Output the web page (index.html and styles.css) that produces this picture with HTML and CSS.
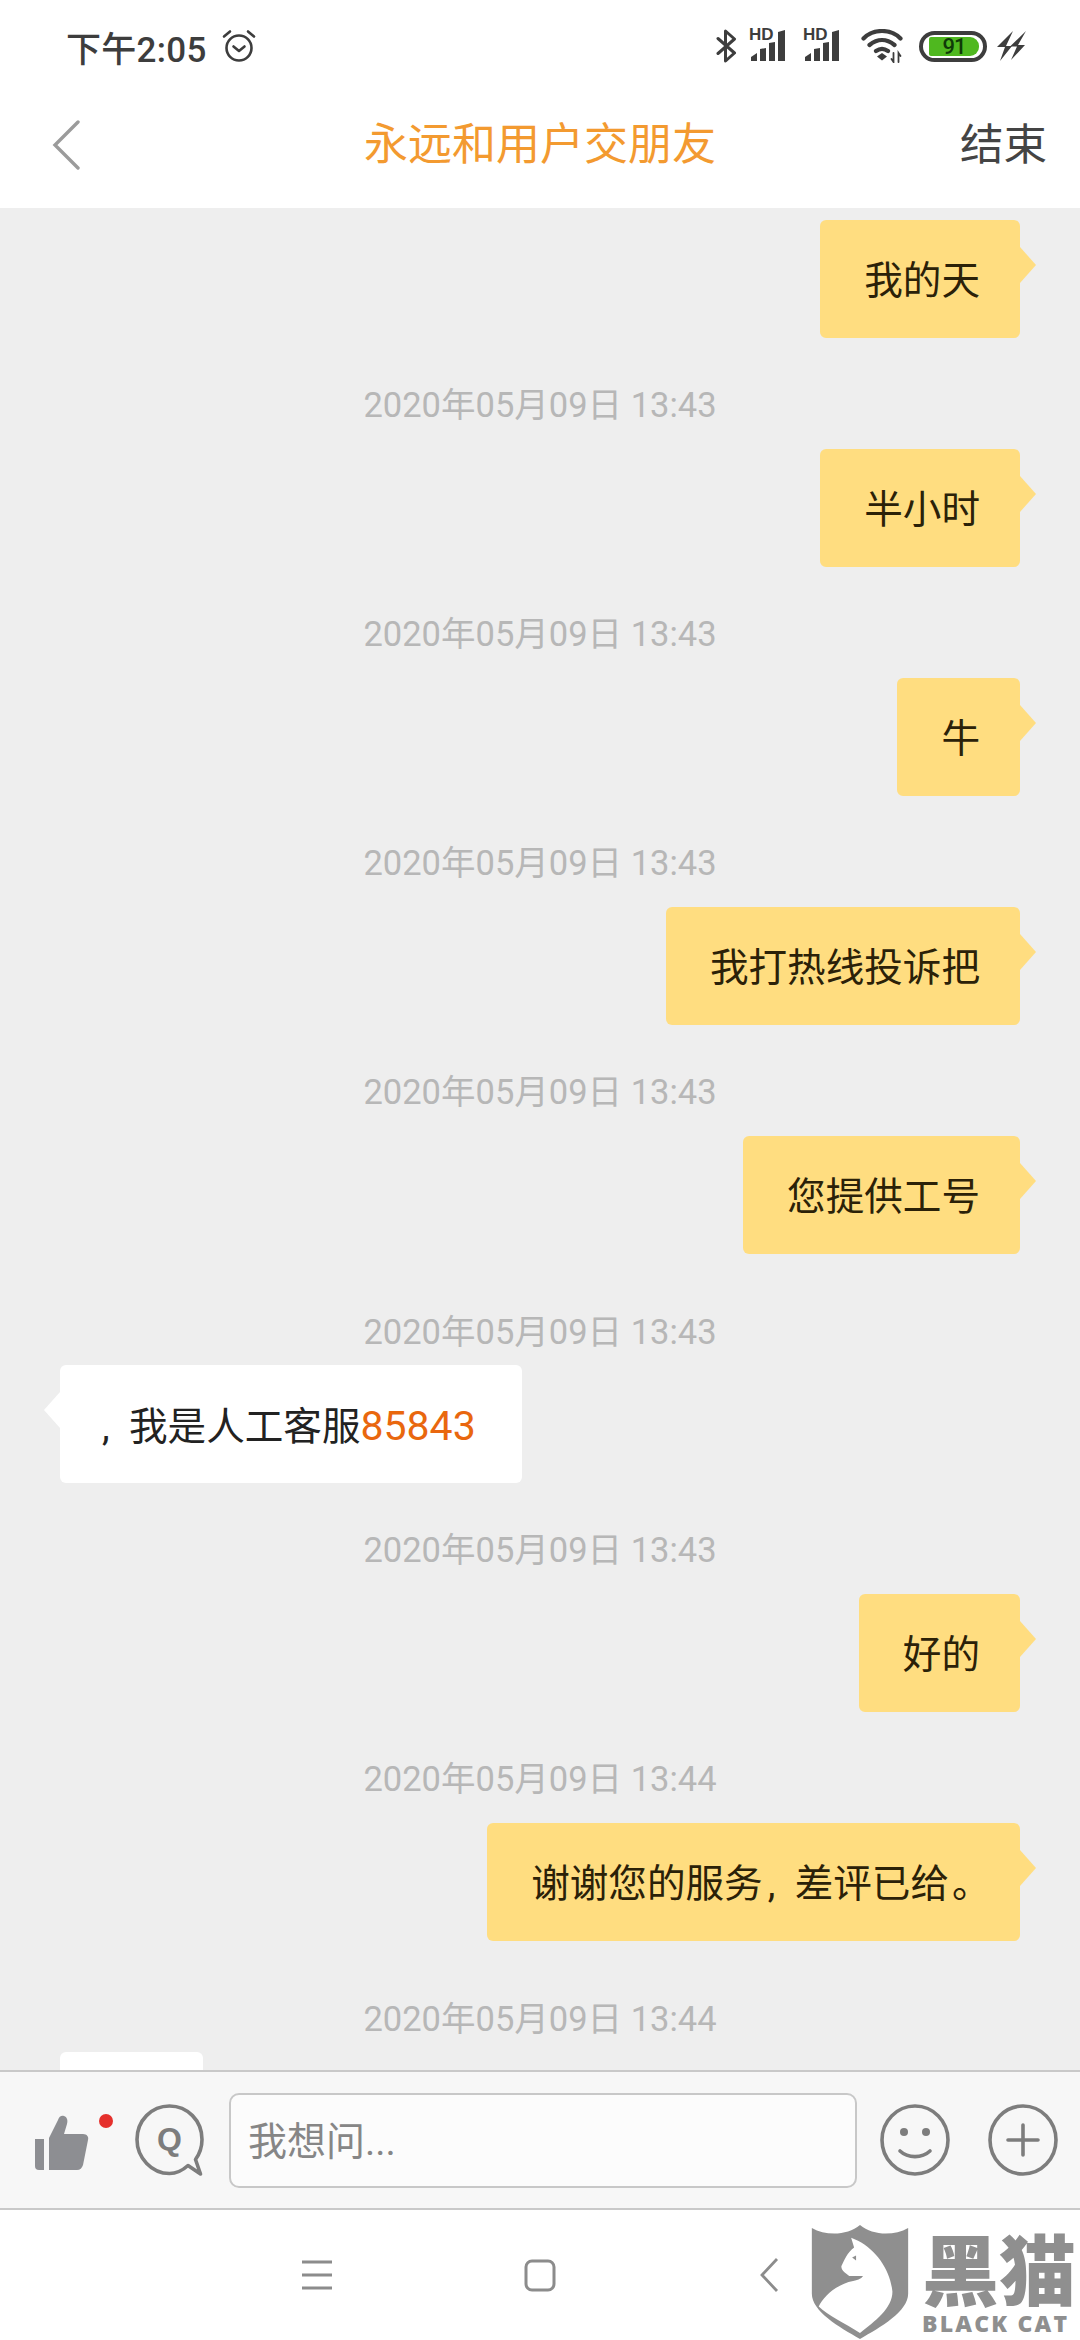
FILE: index.html
```html
<!DOCTYPE html>
<html lang="zh">
<head>
<meta charset="utf-8">
<title>永远和用户交朋友</title>
<link rel="stylesheet" href="styles.css">
</head>
<body>
<div class="app">
  <header class="top">
    <div class="status">
      <div class="status-left">
        <span class="clock">下午2:05</span>
        <svg class="alarm" viewBox="0 0 34 34" fill="none" stroke="#3d3d3d" stroke-width="2.600" stroke-linecap="round" stroke-linejoin="round"><circle cx="17" cy="19" r="12.500"/><path d="M11.500 17.500 17 22l5.500-4.500"/><path d="M2 7.500 8 2.500M32 7.500 26 2.500"/></svg>
      </div>
      <div class="status-right">
        <svg class="bt" width="21" height="34" viewBox="0 0 21 34" fill="none" stroke="#3d3d3d" stroke-width="3" stroke-linecap="round" stroke-linejoin="round"><path d="M2 9.500 18.500 24 9.500 32V2l9 8L2 24.500"/></svg>
        <div class="sig">
          <span class="hd">HD</span>
          <svg width="42" height="34" viewBox="0 0 42 34" fill="#3d3d3d"><path d="M2 32V28L8 24V32ZM11 32V20L17 19V32ZM20 32V14L26 13V32ZM29 32V3L36 1V32Z"/></svg>
        </div>
        <div class="sig">
          <span class="hd">HD</span>
          <svg width="42" height="34" viewBox="0 0 42 34" fill="#3d3d3d"><path d="M2 32V28L8 24V32ZM11 32V20L17 19V32ZM20 32V14L26 13V32ZM29 32V3L36 1V32Z"/></svg>
        </div>
        <svg class="wifi" width="44" height="34" viewBox="0 0 44 34" fill="none" stroke="#3d3d3d" stroke-width="4.200" stroke-linecap="round"><path d="M2.500 9.500C12-.5 30-.5 39.500 9.500M8.500 16c8-6.500 17-6.500 25 0M15 22c4-2.800 8-2.800 12 0"/><path d="M21 24 26 27.500 21 31.500 16 27.500Z" fill="#3d3d3d" stroke="none"/><path d="M32.500 24v9L30.500 30M37.500 33v-9l2 3" stroke-width="1.800"/></svg>
        <div class="batt"><div class="batt-fill">91</div></div>
        <svg class="bolt" width="29" height="30" viewBox="0 0 29 30" fill="#3d3d3d"><path d="M16 0 0 16H8L3 30 15 15H9Z"/><path d="M29 0 13 15.500H20L14 29 28 14H21Z"/></svg>
      </div>
    </div>
    <nav class="titlebar">
      <svg class="back" width="28" height="50" viewBox="0 0 28 50" fill="none" stroke="#9b9b9b" stroke-width="3.400" stroke-linecap="round"><path d="M26 2 3 25 26 48"/></svg>
      <h1 class="title">永远和用户交朋友</h1>
      <span class="end">结束</span>
    </nav>
  </header>

  <main class="chat">
    <div class="row me"><div class="bubble">我的天</div></div>
    <div class="time">2020年05月09日 13:43</div>
    <div class="row me"><div class="bubble">半小时</div></div>
    <div class="time">2020年05月09日 13:43</div>
    <div class="row me"><div class="bubble">牛</div></div>
    <div class="time">2020年05月09日 13:43</div>
    <div class="row me"><div class="bubble">我打热线投诉把</div></div>
    <div class="time">2020年05月09日 13:43</div>
    <div class="row me"><div class="bubble">您提供工号</div></div>
    <div class="time time-low">2020年05月09日 13:43</div>
    <div class="row other"><div class="bubble"><span class="comma">,</span>我是人工客服<span class="num">85843</span></div></div>
    <div class="time">2020年05月09日 13:43</div>
    <div class="row me"><div class="bubble">好的</div></div>
    <div class="time">2020年05月09日 13:44</div>
    <div class="row me"><div class="bubble">谢谢您的服务<span class="comma">,</span>差评已给<span class="stop">。</span></div></div>
    <div class="time time-low">2020年05月09日 13:44</div>
    <div class="row other"><div class="bubble stub"></div></div>
  </main>

  <footer class="inputbar">
    <div class="like">
      <svg width="56" height="56" viewBox="0 0 56 56" fill="#8d8e92"><path d="M2 24h9v31H6a4 4 0 0 1-4-4Z"/><path d="M16 55V23L25 5c1-4 4-5 6-4 3 1 4 4 3 8l-3 10h19c4 0 6 3 5 6l-5 25c-1 3-3 5-6 5Z"/></svg>
      <span class="dot"></span>
    </div>
    <svg class="qa" width="70" height="72" viewBox="0 0 70 72" fill="none" stroke="#7d7d7d" stroke-width="3.600" stroke-linejoin="round"><path d="M53 61.500C47.500 66.500 41 69.500 34.500 69.500 17 69.500 2 54 2 35.500 2 16.500 16.500 2 34.500 2 52.500 2 67 16.500 67 35.500c0 7.500-2.500 14.500-6.500 20l5 14.500Z"/><text x="34.500" y="46" class="qa-q">Q</text></svg>
    <div class="field">我想问...</div>
    <svg class="round" width="70" height="72" viewBox="0 0 70 72" fill="none" stroke="#7d7d7d" stroke-width="3.600" stroke-linecap="round"><ellipse cx="35" cy="36" rx="33" ry="34"/><circle cx="24" cy="28" r="4" fill="#7d7d7d" stroke="none"/><circle cx="46" cy="28" r="4" fill="#7d7d7d" stroke="none"/><path d="M20 47c8 7.500 22 7.500 30 0"/></svg>
    <svg class="round plus" width="70" height="72" viewBox="0 0 70 72" fill="none" stroke="#7d7d7d" stroke-width="3.600" stroke-linecap="round"><ellipse cx="35" cy="36" rx="33" ry="34"/><path d="M35 21v30M20 36h30"/></svg>
  </footer>

  <div class="navbar">
    <svg class="nav-menu" width="32" height="30" viewBox="0 0 32 30" stroke="#8c8c8c" stroke-width="2.800"><path d="M1 2h30M1 15h30M1 28h30"/></svg>
    <svg class="nav-home" width="32" height="33" viewBox="0 0 32 33" fill="none" stroke="#8c8c8c" stroke-width="3"><rect x="2" y="2" width="28" height="29" rx="6"/></svg>
    <svg class="nav-back" width="20" height="34" viewBox="0 0 20 34" fill="none" stroke="#8c8c8c" stroke-width="2.800"><path d="M18 1 3 17 18 33"/></svg>
  </div>

  <div class="mark">
    <svg class="shield" width="98" height="114" viewBox="0 0 98 116"><path d="M0 3C14 11 36 11 49 0 62 11 84 11 98 3V70C98 88 70 104 49 116 28 104 0 88 0 70Z" fill="#8f8f8f"/><path d="M40 13 47 16C66 26 80 46 82 68 82 85 64 98 49 110 34 100 16 92 7 83 12 72 26 60 42 57 48 56 51 54 52 52H38C35 49 30 47 30 42 33 36 36 28 43 23Z" fill="#fff"/><path d="M41 33l4-2v5Z" fill="#8f8f8f"/></svg>
    <div class="mark-text">
      <span class="mark-cn">黑猫</span>
      <span class="mark-en">BLACK CAT</span>
    </div>
  </div>
</div>
</body>
</html>
```
FILE: styles.css
```css
* { box-sizing: border-box; }
html, body { margin: 0; padding: 0; }
body {
  width: 1080px;
  height: 2340px;
  overflow: hidden;
  font-family: Roboto, "Noto Sans CJK SC", sans-serif;
  background: #fff;
}
.app {
  position: relative;
  display: flex;
  flex-direction: column;
  width: 1080px;
  height: 2340px;
}
.top { height: 208px; background: #fff; flex: none; }
.status {
  height: 88px;
  display: flex;
  align-items: center;
  justify-content: space-between;
  padding: 4px 54px 0 66px;
}
.status-left { display: flex; align-items: center; gap: 15px; }
.clock { font-size: 35px; color: #3d3d3d; font-weight: 500; letter-spacing: 0.300px; }
.alarm { width: 34px; height: 34px; }
.status-right { display: flex; align-items: center; }
.bt { margin-right: 12px; }
.sig { position: relative; width: 42px; height: 34px; margin-right: 12px; }
.sig svg { display: block; }
.hd {
  position: absolute;
  left: 0;
  top: -2px;
  font-size: 17px;
  line-height: 15px;
  font-weight: 700;
  color: #3d3d3d;
  font-family: "Liberation Sans", sans-serif;
}
.wifi { margin-left: 4px; margin-right: 14px; }
.batt {
  width: 68px;
  height: 31px;
  border: 4px solid #3d3d3d;
  border-radius: 16px;
  padding: 2px 4px 2px 6px;
  margin-right: 10px;
}
.batt-fill {
  height: 19px;
  width: 100%;
  background: #4fb81f;
  border-radius: 2px 9px 9px 2px;
  color: #0f3a08;
  font-size: 22px;
  line-height: 19px;
  font-weight: 500;
  text-align: center;
  letter-spacing: -1px;
}
.titlebar {
  height: 120px;
  display: grid;
  grid-template-columns: 1fr auto 1fr;
  align-items: center;
  padding: 0 33px 14px;
}
.back { margin: 8px 0 0 19px; }
.title {
  margin: 0;
  font-size: 44px;
  font-weight: 400;
  color: #f39a30;
}
.end { font-size: 43.500px; color: #444; justify-self: end; }

.chat {
  flex: 1;
  min-height: 0;
  overflow: hidden;
  background: #eeeeee;
  padding: 12px 60px;
}
.row { display: flex; }
.row.me { justify-content: flex-end; }
.row.other { justify-content: flex-start; }
.bubble {
  position: relative;
  flex: none;
  height: 118px;
  line-height: 122px;
  padding: 0 40px 0 44px;
  border-radius: 6px;
  font-size: 38.600px;
  white-space: nowrap;
}
.me .bubble { background: #ffdd80; color: #2b2108; }
.other .bubble { background: #fff; color: #222; padding: 0 46px 0 37px; }
.bubble::after {
  content: "";
  position: absolute;
  top: 27px;
  width: 16px;
  height: 36px;
}
.me .bubble::after {
  left: 100%;
  background: #ffdd80;
  clip-path: polygon(0 0, 100% 50%, 0 100%);
}
.other .bubble::after {
  right: 100%;
  background: #fff;
  clip-path: polygon(100% 0, 0 50%, 100% 100%);
}
.bubble.stub { width: 143px; padding: 0; }
.bubble.stub::after { display: none; }
.comma { display: inline-block; width: 32px; padding-left: 5px; }
.stop { display: inline-block; width: 31px; padding-left: 3px; }
.num { color: #e9670e; font-size: 41px; }
.time {
  height: 111px;
  padding-top: 49px;
  font-size: 34.500px;
  line-height: 36px;
  color: #b7b7b7;
  text-align: center;
}
.time-low { padding-top: 60px; }

.inputbar {
  flex: none;
  height: 140px;
  display: flex;
  align-items: center;
  background: #f7f7f7;
  border-top: 2px solid #c9c9c9;
  border-bottom: 2px solid #c9c9c9;
  padding-left: 33px;
}
.like { position: relative; width: 56px; height: 56px; margin-top: 6px; }
.like svg { display: block; }
.dot {
  position: absolute;
  left: 66px;
  top: -1px;
  width: 14px;
  height: 14px;
  border-radius: 50%;
  background: #e5302c;
}
.qa { margin-left: 46px; flex: none; }
.qa-q {
  font-family: "Liberation Sans", sans-serif;
  font-weight: 700;
  font-size: 32px;
  fill: #7d7d7d;
  stroke: none;
  text-anchor: middle;
}
.field {
  width: 628px;
  height: 95px;
  margin-left: 24px;
  margin-right: 23px;
  padding: 3px 0 0 17px;
  background: #fcfcfc;
  border: 2px solid #c8c8c8;
  border-radius: 10px;
  font-size: 39px;
  line-height: 88px;
  color: #868686;
  flex: none;
}
.round { flex: none; }
.plus { margin-left: 38px; }

.navbar {
  flex: none;
  height: 130px;
  display: flex;
  align-items: center;
  padding: 0 0 0 301px;
  background: #fff;
}
.nav-home { margin-left: 191px; }
.nav-back { margin-left: 203px; }

.mark {
  position: absolute;
  left: 811px;
  top: 2225px;
  display: flex;
  gap: 13px;
  color: #8f8f8f;
}
.shield { display: block; flex: none; }
.mark-text { display: flex; flex-direction: column; }
.mark-cn {
  font-family: "Noto Sans CJK SC", sans-serif;
  font-size: 77px;
  line-height: 84px;
  font-weight: 900;
  white-space: nowrap;
}
.mark-en {
  font-family: "Open Sans", sans-serif;
  font-size: 23px;
  line-height: 28px;
  font-weight: 800;
  white-space: nowrap;
  letter-spacing: 2.200px;
}
```
